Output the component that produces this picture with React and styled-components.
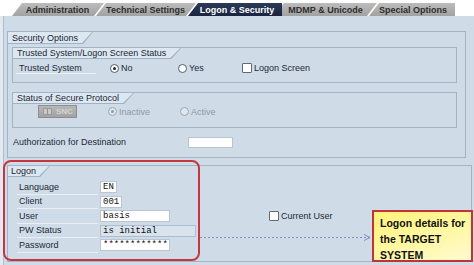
import React from "react";
import styled, { createGlobalStyle } from "styled-components";

const Global = createGlobalStyle`
  html, body { margin: 0; padding: 0; background: #fff; }
  * { box-sizing: border-box; }
`;

const Frame = styled.div`
  position: relative;
  width: 474px;
  height: 265px;
  overflow: hidden;
  background: #fff;
  font-family: "Liberation Sans", Arial, sans-serif;
  font-size: 9px;
  color: #1d2a38;
`;

const TabBar = styled.div`
  display: flex;
  height: 16px;
  padding: 3px 0 0 10px;
  background: #fff;
`;

const slant = "polygon(10px 0, 100% 0, 100% 100%, 0 100%)";

const Tab = styled.div`
  flex: none;
  position: relative;
  z-index: ${(p) => (p.$active ? 3 : 1)};
  width: ${(p) => p.$w}px;
  margin-left: ${(p) => p.$ml}px;
  height: 13px;
  background: #fff;
  clip-path: ${slant};
`;

const TabFace = styled.div`
  height: 100%;
  margin-left: 2px;
  clip-path: ${slant};
  display: flex;
  align-items: center;
  justify-content: center;
  padding: 0 ${(p) => p.$pr}px 0 ${(p) => p.$pl}px;
  background: ${(p) =>
    p.$active
      ? "linear-gradient(#2c3a58, #1a2440)"
      : "linear-gradient(#bcbcbc, #a2a2a2)"};
  color: ${(p) => (p.$active ? "#fff" : "#2e2e2e")};
  font-weight: 700;
  font-size: 9px;
  white-space: nowrap;
`;

const Body = styled.div`
  height: 249px;
  padding-left: 3px;
  background: #e2e9f1;
`;

const Panel = styled.div`
  height: 100%;
  border-left: 1px solid #aebdcc;
  background: #cfdbe7;
  padding: 15px 0 0 3px;
  display: flex;
  flex-direction: column;
`;

const Group = styled.div`
  width: ${(p) => p.$w}px;
  height: ${(p) => p.$h}px;
  margin-top: ${(p) => p.$mt || 0}px;
  border: 1px solid #a2b3c5;
  padding: 0 ${(p) => p.$pr || 0}px 0 ${(p) => p.$pl || 0}px;
  display: flex;
  flex-direction: column;
`;

const LabelShape = styled.div`
  align-self: flex-start;
  margin-left: ${(p) => p.$ml || 0}px;
  height: ${(p) => p.$h || 12}px;
  padding: 0 1px 1px 0;
  background: #9fb1c4;
  clip-path: polygon(0 0, 100% 0, calc(100% - 10px) 100%, 0 100%);
`;

const LabelFace = styled.div`
  height: 100%;
  display: flex;
  align-items: center;
  padding: 0 ${(p) => p.$pr || 13}px 0 ${(p) => p.$pl || 4}px;
  background: #dde7f1;
  clip-path: polygon(0 0, 100% 0, calc(100% - 10px) 100%, 0 100%);
  color: #1b2633;
  white-space: nowrap;
`;

const GroupLabel = ({ children, ...rest }) => (
  <LabelShape {...rest}>
    <LabelFace $pl={rest.$pl} $pr={rest.$pr}>{children}</LabelFace>
  </LabelShape>
);

const Row = styled.div`
  display: flex;
  align-items: center;
  height: ${(p) => p.$h || 12}px;
  margin-top: ${(p) => p.$mt || 0}px;
  padding-left: ${(p) => p.$pl || 0}px;
`;

const FieldLabel = styled.div`
  width: ${(p) => p.$w}px;
  height: 100%;
  display: flex;
  align-items: center;
  padding-left: ${(p) => p.$pl ?? 3}px;
  border-bottom: ${(p) => (p.$line ? "1px solid #e9eff6" : "none")};
  white-space: nowrap;
  flex: none;
`;

const Choice = styled.label`
  display: flex;
  align-items: center;
  width: ${(p) => (p.$w ? p.$w + "px" : "auto")};
  margin-left: ${(p) => p.$ml || 0}px;
  color: ${(p) => (p.$disabled ? "#8e9aa8" : "#1d2a38")};
  flex: none;
  white-space: nowrap;
`;

const RadioDot = styled.span`
  width: 9px;
  height: 9px;
  border-radius: 50%;
  border: 1px solid ${(p) => (p.$disabled ? "#9aa6b3" : "#4f5d6c")};
  background: ${(p) => (p.$disabled ? "#dfe6ee" : "#fff")};
  display: flex;
  align-items: center;
  justify-content: center;
  margin-right: 2px;
  &::after {
    content: "";
    width: 3px;
    height: 3px;
    border-radius: 50%;
    background: ${(p) =>
      p.$checked ? (p.$disabled ? "#8e9aa8" : "#1d2530") : "transparent"};
  }
`;

const CheckBox = styled.span`
  width: 10px;
  height: 10px;
  border: 1px solid #5d6a78;
  background: #fff;
  margin-right: 2px;
  border-radius: 1px;
`;

const SncButton = styled.div`
  width: 39px;
  height: 13px;
  margin-left: ${(p) => p.$ml}px;
  background: linear-gradient(#b7b7b7, #a3a3a3);
  border: 1px solid #8d8d8d;
  display: flex;
  align-items: center;
  gap: 4px;
  padding-left: 4px;
  color: #d3d3d3;
  font-weight: 700;
  font-size: 8px;
  flex: none;
`;

const SncIcon = styled.span`
  width: 9px;
  height: 7px;
  background: linear-gradient(90deg, #c9c9c9 0 40%, #8e8e8e 40% 60%, #c9c9c9 60%);
  border: 1px solid #9a9a9a;
`;

const Input = styled.div`
  width: ${(p) => p.$w}px;
  height: ${(p) => p.$h || 12}px;
  margin-left: ${(p) => p.$ml || 0}px;
  background: ${(p) => (p.$readonly ? "#d9e3ed" : "#fff")};
  border: 1px solid ${(p) => (p.$readonly ? "#aebccb" : "#b9c5d1")};
  font-family: "Liberation Mono", "Courier New", monospace;
  font-size: 9px;
  color: #111;
  display: flex;
  align-items: center;
  padding-left: 2px;
  white-space: nowrap;
  overflow: hidden;
  flex: none;
`;

const RedFrame = styled.div`
  position: absolute;
  left: 3px;
  top: 160px;
  width: 197px;
  height: 101px;
  border: 2px solid #c6363f;
  border-radius: 8px;
  pointer-events: none;
`;

const Callout = styled.div`
  position: absolute;
  left: 372px;
  top: 210px;
  width: 101px;
  height: 52px;
  border: 2px solid #c23339;
  background: linear-gradient(160deg, #fff27a 0%, #fff8a8 60%, #fffbd2 100%);
  padding: 3px 0 0 6px;
  font-family: "Liberation Sans", Arial, sans-serif;
  font-weight: 700;
  font-size: 10.5px;
  line-height: 16px;
  color: #111;
`;

const Arrow = styled.svg`
  position: absolute;
  left: 200px;
  top: 233px;
`;

const tabs = [
  { label: "Administration", w: 95, ml: 0, pl: 8, pr: 10 },
  { label: "Technical Settings", w: 103, ml: -11, pl: 8, pr: 10 },
  { label: "Logon & Security", w: 96, ml: -11, pl: 8, pr: 4, active: true },
  { label: "MDMP & Unicode", w: 105, ml: -10, pl: 10, pr: 10 },
  { label: "Special Options", w: 88, ml: -10, pl: 8, pr: 6 },
];

const logonRows = [
  { label: "Language", value: "EN", w: 17 },
  { label: "Client", value: "001", w: 22 },
  { label: "User", value: "basis", w: 70, current: true },
  { label: "PW Status", value: "is initial", w: 96, readonly: true },
  { label: "Password", value: "************", w: 70 },
];

const Radio = ({ checked, disabled, children, w, ml }) => (
  <Choice $w={w} $ml={ml} $disabled={disabled}>
    <RadioDot $checked={checked} $disabled={disabled} />
    {children}
  </Choice>
);

const LogonRow = styled.div`
  display: flex;
  align-items: center;
  height: 14.5px;
`;

export default function App() {
  return (
    <>
      <Global />
      <Frame>
        <TabBar>
          {tabs.map((t) => (
            <Tab key={t.label} $w={t.w} $ml={t.ml} $active={t.active}>
              <TabFace $active={t.active} $pl={t.pl} $pr={t.pr}>
                {t.label}
              </TabFace>
            </Tab>
          ))}
        </TabBar>
        <Body>
          <Panel>
            <Group $w={459} $h={127} $pl={4} $pr={8}>
              <GroupLabel $ml={-4} $h={12} $pl={4} $pr={14}>
                Security Options
              </GroupLabel>
              <Group $w={445} $h={36} $mt={3}>
                <GroupLabel $h={11} $pl={4} $pr={14}>
                  Trusted System/Logon Screen Status
                </GroupLabel>
                <Row $mt={3} $pl={3}>
                  <FieldLabel $w={80} $line>
                    Trusted System
                  </FieldLabel>
                  <Radio checked w={68} ml={14}>
                    No
                  </Radio>
                  <Radio w={64}>Yes</Radio>
                  <Choice>
                    <CheckBox />
                    Logon Screen
                  </Choice>
                </Row>
              </Group>
              <Group $w={445} $h={36} $mt={9}>
                <GroupLabel $h={11} $pl={4} $pr={14}>
                  Status of Secure Protocol
                </GroupLabel>
                <Row $h={13} $mt={1}>
                  <SncButton $ml={25}>
                    <SncIcon />
                    SNC
                  </SncButton>
                  <Radio checked disabled w={72} ml={31}>
                    Inactive
                  </Radio>
                  <Radio disabled>Active</Radio>
                </Row>
              </Group>
              <Row $mt={8} $h={12} $pl={1}>
                <FieldLabel $w={175} $pl={0}>
                  Authorization for Destination
                </FieldLabel>
                <Input $w={45} $h={11} $ml={0} />
              </Row>
            </Group>
            <Group $w={465} $h={97} $mt={7} $pl={9}>
              <GroupLabel $ml={-9} $h={11} $pl={3} $pr={13}>
                Logon
              </GroupLabel>
              <div style={{ height: 3 }} />
              {logonRows.map((r) => (
                <LogonRow key={r.label}>
                  <FieldLabel $w={81} $pl={2} $line>
                    {r.label}
                  </FieldLabel>
                  <Input $w={r.w} $ml={2} $readonly={r.readonly}>
                    {r.value}
                  </Input>
                  {r.current && (
                    <Choice $ml={99}>
                      <CheckBox />
                      Current User
                    </Choice>
                  )}
                </LogonRow>
              ))}
            </Group>
          </Panel>
        </Body>
        <RedFrame />
        <Arrow width="173" height="9" viewBox="0 0 173 9">
          <line
            x1="0"
            y1="4.5"
            x2="169"
            y2="4.5"
            stroke="#7d8cc2"
            strokeWidth="1"
            strokeDasharray="2 2"
          />
          <polyline
            points="164,1.5 170,4.5 164,7.5"
            fill="none"
            stroke="#7d8cc2"
            strokeWidth="1"
          />
        </Arrow>
        <Callout>
          Logon details for
          <br />
          the TARGET
          <br />
          SYSTEM
        </Callout>
      </Frame>
    </>
  );
}
